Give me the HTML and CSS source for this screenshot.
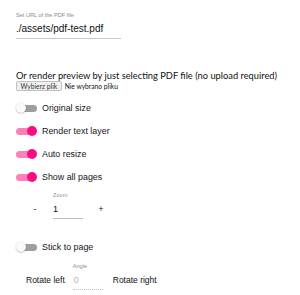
FILE: index.html
```html
<!DOCTYPE html>
<html>
<head>
<meta charset="utf-8">
<link rel="stylesheet" href="styles.css">
</head>
<body>
<div class="page">
  <div class="url-field">
    <div class="float-label">Set URL of the PDF file</div>
    <div class="url-value">./assets/pdf-test.pdf</div>
  </div>

  <div class="or-text">Or render preview by just selecting PDF file (no upload required)</div>
  <div class="file-row">
    <span class="file-btn">Wybierz plik</span>
    <span class="file-none">Nie wybrano pliku</span>
  </div>

  <div class="toggles">
    <div class="toggle-row">
      <span class="toggle"><span class="track"></span><span class="thumb"></span></span>
      <span class="toggle-label">Original size</span>
    </div>
    <div class="toggle-row">
      <span class="toggle on"><span class="track"></span><span class="thumb"></span></span>
      <span class="toggle-label">Render text layer</span>
    </div>
    <div class="toggle-row">
      <span class="toggle on"><span class="track"></span><span class="thumb"></span></span>
      <span class="toggle-label">Auto resize</span>
    </div>
    <div class="toggle-row">
      <span class="toggle on"><span class="track"></span><span class="thumb"></span></span>
      <span class="toggle-label">Show all pages</span>
    </div>
  </div>

  <div class="zoom-row">
    <span class="sym-btn">-</span>
    <div class="small-field">
      <div class="small-label">Zoom</div>
      <div class="small-value solid">1</div>
    </div>
    <span class="sym-btn">+</span>
  </div>

  <div class="toggle-row stick">
    <span class="toggle"><span class="track"></span><span class="thumb"></span></span>
    <span class="toggle-label">Stick to page</span>
  </div>

  <div class="rotate-row">
    <span class="rot-btn">Rotate left</span>
    <div class="small-field angle">
      <div class="small-label">Angle</div>
      <div class="small-value dotted placeholder">0</div>
    </div>
    <span class="rot-btn right">Rotate right</span>
  </div>
</div>
</body>
</html>
```
FILE: styles.css
```css
html, body {
  margin: 0;
  padding: 0;
  background: #ffffff;
}
body {
  font-family: "Liberation Sans", Arial, sans-serif;
  color: #1a1a1a;
}
.page {
  padding: 12px 0 0 16px;
}
.url-field {
  width: 105px;
  border-bottom: 1px solid #c8c8c8;
}
.float-label {
  font-size: 5.6px;
  line-height: 6px;
  color: #8a8a8a;
}
.url-value {
  margin-top: 5px;
  font-size: 10px;
  line-height: 12px;
  padding-bottom: 3px;
  color: #111;
}
.or-text {
  margin-top: 31px;
  font-family: Lato, "Liberation Sans", sans-serif;
  font-size: 9.3px;
  line-height: 11px;
  color: #111;
}
.file-row {
  display: flex;
  align-items: center;
  margin-top: 0;
  font-family: Lato, "Liberation Sans", sans-serif;
  font-size: 6.7px;
}
.file-btn {
  display: inline-block;
  border: 1px solid #c0c0c0;
  border-radius: 2px;
  background: #f0f0f0;
  padding: 0.5px 3.5px;
  line-height: 7px;
  color: #333;
}
.file-none {
  margin-left: 3px;
  color: #111;
}
.toggles {
  margin-top: 11px;
  display: flex;
  flex-direction: column;
  gap: 11px;
}
.toggle-row {
  display: flex;
  align-items: center;
  height: 12px;
}
.toggle {
  position: relative;
  width: 21px;
  height: 10px;
  flex: none;
}
.toggle .track {
  position: absolute;
  left: 2px;
  top: 1.5px;
  width: 19px;
  height: 7px;
  border-radius: 4px;
  background: #9e9e9e;
}
.toggle .thumb {
  position: absolute;
  left: 0;
  top: 0;
  width: 10px;
  height: 10px;
  border-radius: 50%;
  background: #fafafa;
  box-shadow: 0 0.5px 1.5px rgba(0,0,0,0.35);
}
.toggle.on .track {
  left: 0;
  background: #ff80b6;
}
.toggle.on .thumb {
  left: 11px;
  background: #ff0a80;
  box-shadow: none;
}
.toggle-label {
  margin-left: 5px;
  font-size: 8.9px;
  color: #151515;
}
.zoom-row {
  margin-top: 9px;
  padding-left: 10px;
  display: flex;
  align-items: flex-end;
}
.sym-btn {
  width: 18px;
  text-align: center;
  font-size: 8.5px;
  line-height: 10px;
  margin-bottom: 5px;
  color: #111;
}
.small-field {
  width: 30px;
  margin: 0 9px;
}
.small-label {
  font-size: 5.6px;
  line-height: 6px;
  color: #909090;
}
.small-value {
  margin-top: 6px;
  font-size: 9px;
  line-height: 10px;
  padding-bottom: 4px;
  color: #111;
}
.small-value.solid {
  border-bottom: 1px solid #bdbdbd;
}
.small-value.dotted {
  border-bottom: 1px dotted #c4c4c4;
}
.small-value.placeholder {
  color: #b5b5b5;
  padding-left: 1px;
}
.stick {
  margin-top: 22px;
}
.rotate-row {
  margin-top: 9.5px;
  padding-left: 10px;
  display: flex;
  align-items: flex-end;
}
.rot-btn {
  font-size: 8.5px;
  line-height: 10px;
  margin-bottom: 5px;
  color: #111;
}
.angle {
  margin: 0 10px 0 8px;
}
```
